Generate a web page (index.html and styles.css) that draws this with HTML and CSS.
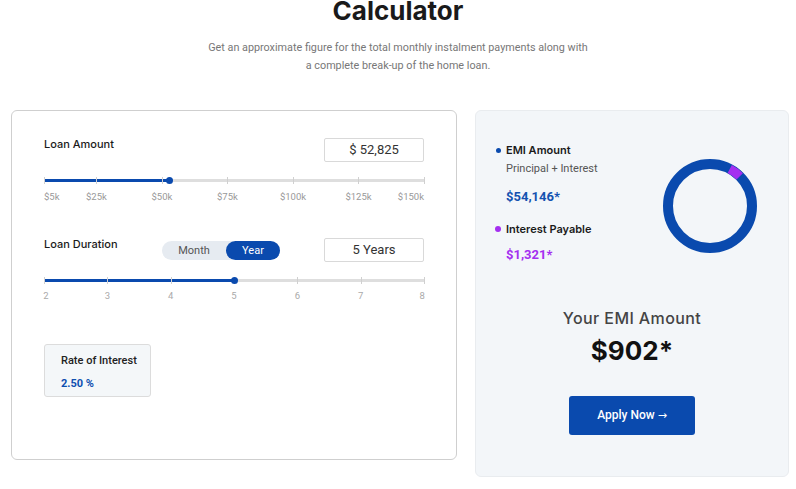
FILE: index.html
```html
<!DOCTYPE html>
<html lang="en">

<head>
  <meta charset="UTF-8">
  <meta name="viewport" content="width=device-width, initial-scale=1.0">
  <title>Calculator</title>
  <link rel="stylesheet" href="styles.css">
</head>

<body>

  <h1 class="title">Calculator</h1>
  <p class="intro">Get an approximate figure for the total monthly instalment payments along with<br>a complete break-up of the home loan.</p>

  <div class="calc">
    <div class="calc-form">
      <div class="field-row">
        <div class="field-label">Loan Amount</div>
        <div class="field-value">$ 52,825</div>
      </div>
      <div class="slider">
        <div class="slider-fill" style="width: 33%"></div>
        <i class="tick" style="left: 0%"></i>
        <i class="tick" style="left: 13.79%"></i>
        <i class="tick" style="left: 31.03%"></i>
        <i class="tick" style="left: 48.28%"></i>
        <i class="tick" style="left: 65.52%"></i>
        <i class="tick" style="left: 82.76%"></i>
        <i class="tick" style="left: 100%"></i>
        <div class="thumb" style="left: 33%"></div>
      </div>
      <div class="scale">
        <span class="first" style="left: 0%">$5k</span>
        <span style="left: 13.79%">$25k</span>
        <span style="left: 31.03%">$50k</span>
        <span style="left: 48.28%">$75k</span>
        <span style="left: 65.52%">$100k</span>
        <span style="left: 82.76%">$125k</span>
        <span class="last" style="left: 100%">$150k</span>
      </div>

      <div class="field-row second">
        <div class="field-label wide">Loan Duration</div>
        <div class="toggle">
          <div class="toggle-item">Month</div>
          <div class="toggle-item active">Year</div>
        </div>
        <div class="field-value">5 Years</div>
      </div>
      <div class="slider">
        <div class="slider-fill" style="width: 50%"></div>
        <i class="tick" style="left: 0%"></i>
        <i class="tick" style="left: 16.67%"></i>
        <i class="tick" style="left: 33.33%"></i>
        <i class="tick" style="left: 50%"></i>
        <i class="tick" style="left: 66.67%"></i>
        <i class="tick" style="left: 83.33%"></i>
        <i class="tick" style="left: 100%"></i>
        <div class="thumb" style="left: 50%"></div>
      </div>
      <div class="scale light">
        <span style="left: 0.5%">2</span>
        <span style="left: 16.67%">3</span>
        <span style="left: 33.33%">4</span>
        <span style="left: 50%">5</span>
        <span style="left: 66.67%">6</span>
        <span style="left: 83.33%">7</span>
        <span style="left: 99.5%">8</span>
      </div>

      <div class="rate-box">
        <div class="rate-label">Rate of Interest</div>
        <div class="rate-value">2.50 %</div>
      </div>
    </div>

    <div class="calc-result">
      <div class="result-top">
        <div class="legend">
          <div class="legend-title"><span class="dot"></span>EMI Amount</div>
          <div class="legend-sub">Principal + Interest</div>
          <div class="legend-num">$54,146*</div>
          <div class="legend-title second"><span class="dot purple"></span>Interest Payable</div>
          <div class="legend-num purple">$1,321*</div>
        </div>
        <svg class="donut" width="94" height="94" viewBox="0 0 94 94">
          <circle cx="47" cy="47" r="42" fill="none" stroke="#0a4aae" stroke-width="10" />
          <circle cx="47" cy="47" r="42" fill="none" stroke="#a42ff0" stroke-width="9"
            stroke-dasharray="12.5 300" transform="rotate(-62 47 47)" />
        </svg>
      </div>
      <div class="summary">
        <div class="summary-label">Your EMI Amount</div>
        <div class="summary-num">$902*</div>
        <a class="apply-btn" href="#">Apply Now <span class="arrow">&rarr;</span></a>
      </div>
    </div>
  </div>

</body>

</html>
```

FILE: styles.css
```css
body {
  margin: 0;
  background-color: #fff;
  font-family: Roboto, "Liberation Sans", sans-serif;
  color: #222;
}

.title {
  margin: 2px 0 0;
  text-align: center;
  font-family: Inter, sans-serif;
  font-size: 26px;
  line-height: 18px;
  font-weight: 700;
  color: #1a1a1a;
}

.intro {
  margin: 19px 0 0;
  text-align: center;
  font-size: 10.8px;
  line-height: 18px;
  color: #777;
}

.calc {
  display: flex;
  align-items: flex-start;
  gap: 18px;
  margin-top: 35px;
  padding-left: 11px;
}

/* left card */
.calc-form {
  box-sizing: border-box;
  width: 446px;
  height: 350px;
  padding: 27px 32px 0;
  border: 1px solid #cfcfcf;
  border-radius: 6px;
  background-color: #fff;
}

.field-row {
  display: flex;
  align-items: flex-start;
}

.field-row.second {
  margin-top: 35px;
}

.field-label {
  font-family: Inter, sans-serif;
  font-size: 11px;
  font-weight: 500;
  line-height: 12px;
  color: #1a1a1a;
}

.field-label.wide {
  width: 118px;
}

.field-value {
  box-sizing: border-box;
  width: 100px;
  height: 24px;
  margin-left: auto;
  border: 1px solid #d9d9d9;
  border-radius: 2px;
  text-align: center;
  font-size: 13px;
  line-height: 22px;
  color: #333;
}

.toggle {
  display: flex;
  width: 118px;
  height: 19px;
  margin-top: 3px;
  border-radius: 10px;
  background-color: #e6ebf1;
}

.toggle-item {
  width: 64px;
  text-align: center;
  font-size: 11px;
  line-height: 19px;
  color: #555;
}

.toggle-item.active {
  width: 54px;
  border-radius: 10px;
  background-color: #0a4aae;
  color: #fff;
}

.slider {
  position: relative;
  height: 3px;
  margin-top: 16.5px;
  background-color: #dedede;
}

.slider-fill {
  height: 3px;
  background-color: #0a4aae;
}

.tick {
  position: absolute;
  top: -2px;
  width: 1px;
  height: 7px;
  background-color: #d0d0d0;
}

.thumb {
  position: absolute;
  top: -2px;
  width: 7px;
  height: 7px;
  margin-left: -3.5px;
  border-radius: 50%;
  background-color: #0a4aae;
}

.scale {
  position: relative;
  height: 12px;
  margin-top: 9.5px;
  font-size: 9.5px;
  line-height: 12px;
  color: #999;
}

.scale.light {
  margin-top: 8.5px;
  color: #aaa;
}

.scale span {
  position: absolute;
  top: 0;
  transform: translateX(-50%);
  white-space: nowrap;
}

.scale .first {
  transform: none;
}

.scale .last {
  transform: translateX(-100%);
}

.rate-box {
  box-sizing: border-box;
  width: 107px;
  height: 53px;
  margin-top: 42px;
  padding: 9px 0 0 16px;
  border: 1px solid #dcdcdc;
  border-radius: 3px;
  background-color: #f4f7f9;
}

.rate-label {
  font-size: 11px;
  font-weight: 500;
  line-height: 14px;
  color: #222;
}

.rate-value {
  margin-top: 9px;
  font-size: 11px;
  font-weight: 700;
  line-height: 14px;
  color: #0d4fb0;
}

/* right card */
.calc-result {
  box-sizing: border-box;
  width: 314px;
  height: 367px;
  padding: 31px 31px 0 20px;
  border: 1px solid #e9ecef;
  border-radius: 6px;
  background-color: #f3f6f9;
}

.result-top {
  display: flex;
  justify-content: space-between;
  align-items: flex-start;
}

.legend-title {
  display: flex;
  align-items: center;
  font-family: Inter, sans-serif;
  font-size: 11px;
  font-weight: 600;
  line-height: 16px;
  color: #1a1a1a;
}

.legend-title.second {
  margin-top: 15px;
}

.dot {
  width: 5px;
  height: 5px;
  margin-right: 5px;
  border-radius: 50%;
  background-color: #0a4aae;
}

.dot.purple {
  width: 6px;
  height: 6px;
  margin-left: -1px;
  background-color: #a42ff0;
}

.legend-sub {
  margin: 3px 0 0 10px;
  font-size: 11px;
  line-height: 16px;
  color: #555;
}

.legend-num {
  margin: 11px 0 0 10px;
  font-size: 13px;
  font-weight: 700;
  line-height: 18px;
  color: #1452b0;
}

.legend-num.purple {
  margin-top: 9px;
  color: #a42ff0;
}

.donut {
  margin-top: 17px;
}

.summary {
  display: flex;
  flex-direction: column;
  align-items: center;
  margin: 44px 0 0 11px;
}

.summary-label {
  font-family: Inter, sans-serif;
  font-size: 16px;
  font-weight: 500;
  line-height: 20px;
  letter-spacing: 0.4px;
  color: #444;
}

.summary-num {
  margin-top: 7px;
  font-family: Inter, sans-serif;
  font-size: 26px;
  font-weight: 700;
  line-height: 32px;
  color: #111;
}

.apply-btn {
  width: 126px;
  height: 39px;
  margin-top: 29px;
  border-radius: 3px;
  background-color: #0a4aae;
  text-align: center;
  font-size: 12px;
  font-weight: 500;
  line-height: 39px;
  color: #fff;
  text-decoration: none;
}

.apply-btn .arrow {
  font-family: "DejaVu Sans", sans-serif;
  font-size: 11px;
}
```
